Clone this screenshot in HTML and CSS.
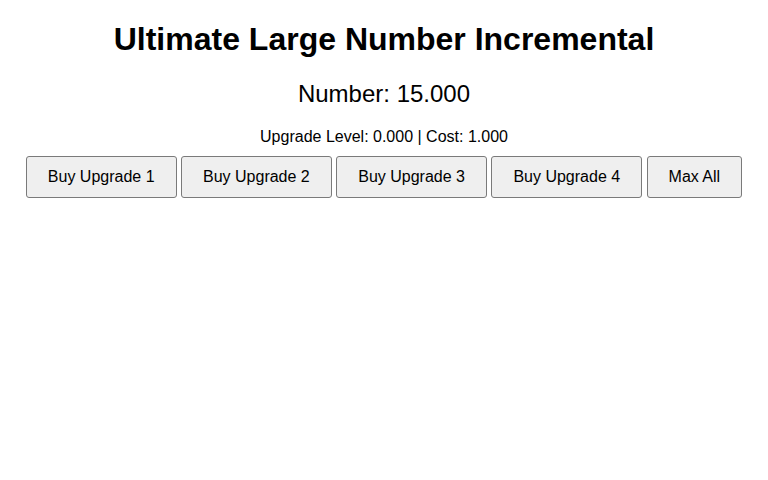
FILE: index.html
```html
<!DOCTYPE html>
<html>
<head>
<meta charset="utf-8">
<link rel="stylesheet" href="styles.css">
</head>
<body>
<h1 class="title">Ultimate Large Number Incremental</h1>
<div class="number">Number: 15.000</div>
<div class="info">Upgrade Level: 0.000 | Cost: 1.000</div>
<div class="buttons">
<button class="btn">Buy Upgrade 1</button>
<button class="btn">Buy Upgrade 2</button>
<button class="btn">Buy Upgrade 3</button>
<button class="btn">Buy Upgrade 4</button>
<button class="btn">Max All</button>
</div>
</body>
</html>
```
FILE: styles.css
```css
body {
  margin: 0;
  padding: 21px 20px 20px;
  font-family: "Liberation Sans", Arial, sans-serif;
  text-align: center;
  background: #fff;
  color: #000;
}
.title {
  font-size: 32px;
  font-weight: bold;
  margin: 0 0 22px;
}
.number {
  font-size: 24px;
  margin: 0 0 20px;
}
.info {
  font-size: 16px;
  margin: 0 0 10px;
}
.btn {
  font-family: "Liberation Sans", Arial, sans-serif;
  font-size: 16px;
  padding: 11px 21px;
  margin: 0;
  border: 1px solid #7a7a7a;
  border-radius: 3px;
  background: #efefef;
  color: #000;
}
```
